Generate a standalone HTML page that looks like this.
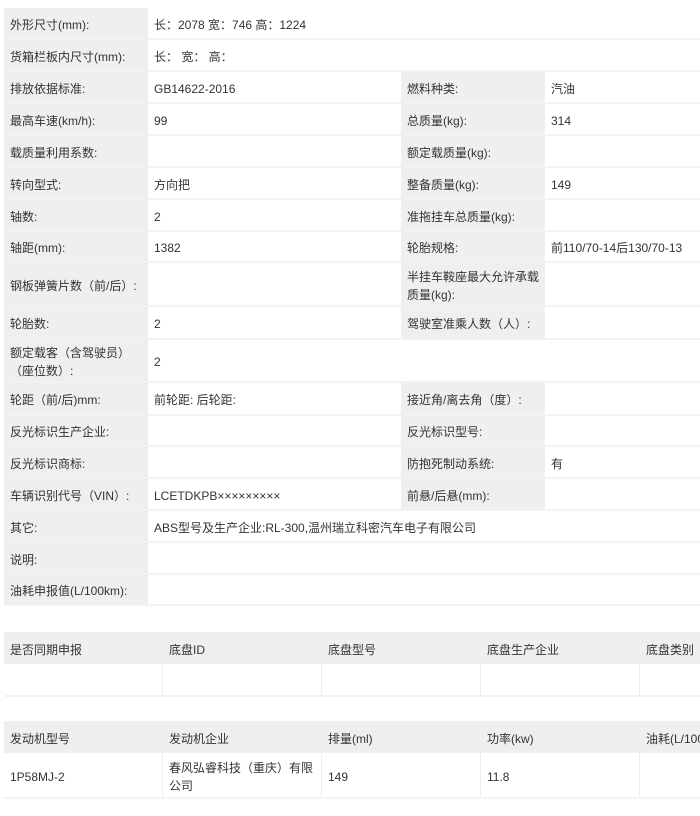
<!DOCTYPE html>
<html><head><meta charset="utf-8"><style>
body{margin:0;width:700px;height:816px;background:#fff;overflow:hidden;font-family:"Liberation Sans","Noto Sans CJK SC",sans-serif;font-size:12px;color:#333;position:relative}
.c{position:absolute;box-sizing:border-box;padding-left:6px;padding-top:3px;display:flex;align-items:center;border-bottom:2px solid #f3f3f3;line-height:18px}
.g{background:#efefef;border-bottom-color:#f2f2f2}
</style></head><body>
<div class="c g" style="left:4px;top:8px;width:144px;height:32px">外形尺寸(mm):</div>
<div class="c" style="left:148px;top:8px;width:552px;height:32px">长：2078 宽：746 高：1224</div>
<div class="c g" style="left:4px;top:40px;width:144px;height:32px">货箱栏板内尺寸(mm):</div>
<div class="c" style="left:148px;top:40px;width:552px;height:32px">长： 宽： 高：</div>

<div class="c g" style="left:4px;top:72px;width:144px;height:32px">排放依据标准:</div>
<div class="c" style="left:148px;top:72px;width:253px;height:32px">GB14622-2016</div>
<div class="c g" style="left:401px;top:72px;width:144px;height:32px">燃料种类:</div>
<div class="c" style="left:545px;top:72px;width:155px;height:32px">汽油</div>

<div class="c g" style="left:4px;top:104px;width:144px;height:32px">最高车速(km/h):</div>
<div class="c" style="left:148px;top:104px;width:253px;height:32px">99</div>
<div class="c g" style="left:401px;top:104px;width:144px;height:32px">总质量(kg):</div>
<div class="c" style="left:545px;top:104px;width:155px;height:32px">314</div>

<div class="c g" style="left:4px;top:136px;width:144px;height:32px">载质量利用系数:</div>
<div class="c" style="left:148px;top:136px;width:253px;height:32px"></div>
<div class="c g" style="left:401px;top:136px;width:144px;height:32px">额定载质量(kg):</div>
<div class="c" style="left:545px;top:136px;width:155px;height:32px"></div>

<div class="c g" style="left:4px;top:168px;width:144px;height:32px">转向型式:</div>
<div class="c" style="left:148px;top:168px;width:253px;height:32px">方向把</div>
<div class="c g" style="left:401px;top:168px;width:144px;height:32px">整备质量(kg):</div>
<div class="c" style="left:545px;top:168px;width:155px;height:32px">149</div>

<div class="c g" style="left:4px;top:200px;width:144px;height:32px">轴数:</div>
<div class="c" style="left:148px;top:200px;width:253px;height:32px">2</div>
<div class="c g" style="left:401px;top:200px;width:144px;height:32px">准拖挂车总质量(kg):</div>
<div class="c" style="left:545px;top:200px;width:155px;height:32px"></div>

<div class="c g" style="left:4px;top:232px;width:144px;height:31px">轴距(mm):</div>
<div class="c" style="left:148px;top:232px;width:253px;height:31px">1382</div>
<div class="c g" style="left:401px;top:232px;width:144px;height:31px">轮胎规格:</div>
<div class="c" style="left:545px;top:232px;width:155px;height:31px;white-space:nowrap">前110/70-14后130/70-13</div>

<div class="c g" style="left:4px;top:263px;width:144px;height:44px">钢板弹簧片数（前/后）:</div>
<div class="c" style="left:148px;top:263px;width:253px;height:44px"></div>
<div class="c g" style="left:401px;top:263px;width:144px;height:44px;padding-right:4px">半挂车鞍座最大允许承载质量(kg):</div>
<div class="c" style="left:545px;top:263px;width:155px;height:44px"></div>

<div class="c g" style="left:4px;top:307px;width:144px;height:33px">轮胎数:</div>
<div class="c" style="left:148px;top:307px;width:253px;height:33px">2</div>
<div class="c g" style="left:401px;top:307px;width:144px;height:33px">驾驶室准乘人数（人）:</div>
<div class="c" style="left:545px;top:307px;width:155px;height:33px"></div>

<div class="c g" style="left:4px;top:340px;width:144px;height:43px;padding-right:4px">额定载客（含驾驶员）（座位数）:</div>
<div class="c" style="left:148px;top:340px;width:552px;height:43px">2</div>

<div class="c g" style="left:4px;top:383px;width:144px;height:33px">轮距（前/后)mm:</div>
<div class="c" style="left:148px;top:383px;width:253px;height:33px">前轮距: 后轮距:</div>
<div class="c g" style="left:401px;top:383px;width:144px;height:33px">接近角/离去角（度）:</div>
<div class="c" style="left:545px;top:383px;width:155px;height:33px"></div>

<div class="c g" style="left:4px;top:416px;width:144px;height:31px">反光标识生产企业:</div>
<div class="c" style="left:148px;top:416px;width:253px;height:31px"></div>
<div class="c g" style="left:401px;top:416px;width:144px;height:31px">反光标识型号:</div>
<div class="c" style="left:545px;top:416px;width:155px;height:31px"></div>

<div class="c g" style="left:4px;top:447px;width:144px;height:32px">反光标识商标:</div>
<div class="c" style="left:148px;top:447px;width:253px;height:32px"></div>
<div class="c g" style="left:401px;top:447px;width:144px;height:32px">防抱死制动系统:</div>
<div class="c" style="left:545px;top:447px;width:155px;height:32px">有</div>

<div class="c g" style="left:4px;top:479px;width:144px;height:32px">车辆识别代号（VIN）:</div>
<div class="c" style="left:148px;top:479px;width:253px;height:32px">LCETDKPB×××××××××</div>
<div class="c g" style="left:401px;top:479px;width:144px;height:32px">前悬/后悬(mm):</div>
<div class="c" style="left:545px;top:479px;width:155px;height:32px"></div>

<div class="c g" style="left:4px;top:511px;width:144px;height:32px">其它:</div>
<div class="c" style="left:148px;top:511px;width:552px;height:32px">ABS型号及生产企业:RL-300,温州瑞立科密汽车电子有限公司</div>
<div class="c g" style="left:4px;top:543px;width:144px;height:32px">说明:</div>
<div class="c" style="left:148px;top:543px;width:552px;height:32px"></div>
<div class="c g" style="left:4px;top:575px;width:144px;height:31px">油耗申报值(L/100km):</div>
<div class="c" style="left:148px;top:575px;width:552px;height:31px"></div>

<div class="c g" style="left:4px;top:632px;width:696px;height:32px;border:0"></div>
<div class="c" style="left:4px;top:632px;width:159px;height:32px;border:0">是否同期申报</div>
<div class="c" style="left:163px;top:632px;width:159px;height:32px;border:0">底盘ID</div>
<div class="c" style="left:322px;top:632px;width:159px;height:32px;border:0">底盘型号</div>
<div class="c" style="left:481px;top:632px;width:159px;height:32px;border:0">底盘生产企业</div>
<div class="c" style="left:640px;top:632px;width:60px;height:32px;border:0;white-space:nowrap">底盘类别</div>
<div class="c" style="left:4px;top:664px;width:159px;height:33px;border-right:1px solid #eee"></div>
<div class="c" style="left:163px;top:664px;width:159px;height:33px;border-right:1px solid #eee"></div>
<div class="c" style="left:322px;top:664px;width:159px;height:33px;border-right:1px solid #eee"></div>
<div class="c" style="left:481px;top:664px;width:159px;height:33px;border-right:1px solid #eee"></div>
<div class="c" style="left:640px;top:664px;width:60px;height:33px"></div>

<div class="c g" style="left:4px;top:721px;width:696px;height:32px;border:0"></div>
<div class="c" style="left:4px;top:721px;width:159px;height:32px;border:0">发动机型号</div>
<div class="c" style="left:163px;top:721px;width:159px;height:32px;border:0">发动机企业</div>
<div class="c" style="left:322px;top:721px;width:159px;height:32px;border:0">排量(ml)</div>
<div class="c" style="left:481px;top:721px;width:159px;height:32px;border:0">功率(kw)</div>
<div class="c" style="left:640px;top:721px;width:60px;height:32px;border:0;white-space:nowrap;overflow:hidden">油耗(L/100km)</div>
<div class="c" style="left:4px;top:753px;width:159px;height:46px;border-right:1px solid #eee">1P58MJ-2</div>
<div class="c" style="left:163px;top:753px;width:159px;height:46px;border-right:1px solid #eee;padding-right:8px">春风弘睿科技（重庆）有限公司</div>
<div class="c" style="left:322px;top:753px;width:159px;height:46px;border-right:1px solid #eee">149</div>
<div class="c" style="left:481px;top:753px;width:159px;height:46px;border-right:1px solid #eee">11.8</div>
<div class="c" style="left:640px;top:753px;width:60px;height:46px"></div>
</body></html>
